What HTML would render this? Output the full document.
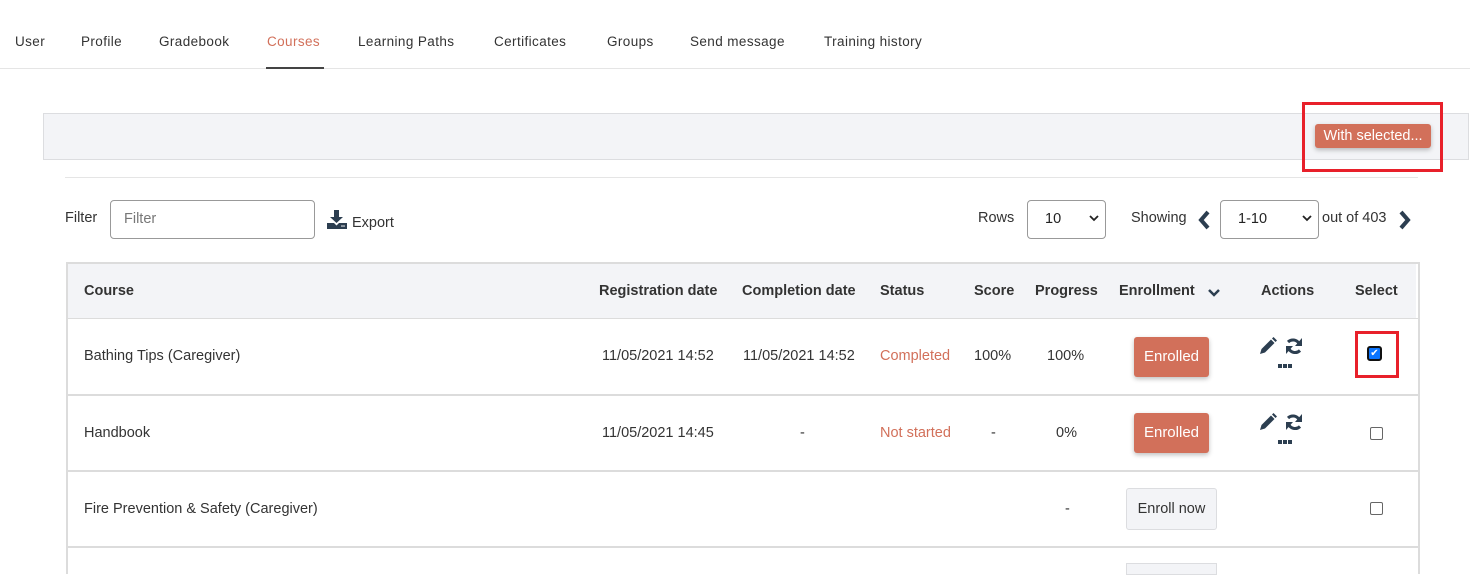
<!DOCTYPE html><html><head><style>
body{margin:0;width:1470px;height:567px;overflow:hidden;background:#fff;font-family:"Liberation Sans",sans-serif;color:#343a40;position:relative}
.a{position:absolute;white-space:nowrap}
.nav{font-size:13.5px;letter-spacing:.4px;color:#333;top:34px}
.th{font-size:14.5px;font-weight:bold;color:#333;top:283px}
.td{font-size:14.5px;color:#333}
.btn{position:absolute;background:#d2705a;color:#fff;font-size:15px;border-radius:3px;box-shadow:0 2px 5px rgba(0,0,0,.25);text-align:center}
.hl{position:absolute;left:66px;width:1352px;height:2px;background:#dcdcdc}
.cb{position:absolute;width:11px;height:11px;border:1px solid #666;border-radius:2px;background:#fff}
</style></head><body>
<div class="a nav" style="left:15px">User</div>
<div class="a nav" style="left:81px">Profile</div>
<div class="a nav" style="left:159px">Gradebook</div>
<div class="a nav" style="left:267px;color:#d2705a">Courses</div>
<div class="a nav" style="left:358px">Learning Paths</div>
<div class="a nav" style="left:494px">Certificates</div>
<div class="a nav" style="left:607px">Groups</div>
<div class="a nav" style="left:690px">Send message</div>
<div class="a nav" style="left:824px">Training history</div>
<div class="a" style="left:0;top:68px;width:1470px;height:1px;background:#e5e5e5"></div>
<div class="a" style="left:266px;top:67px;width:58px;height:2px;background:#444"></div>

<div class="a" style="left:43px;top:113px;width:1424px;height:45px;background:#f3f4f7;border:1px solid #dcdde0"></div>
<div class="btn" style="left:1315px;top:124px;width:116px;height:24px;line-height:24px;font-size:14.5px">With selected...</div>
<div class="a" style="left:1302px;top:102px;width:135px;height:64px;border:3px solid #e8202a"></div>
<div class="a" style="left:65px;top:177px;width:1353px;height:1px;background:#e5e5e5"></div>

<div class="a td" style="left:65px;top:210px">Filter</div>
<div class="a" style="left:110px;top:200px;width:203px;height:37px;border:1px solid #999;border-radius:4px"></div>
<div class="a td" style="left:124px;top:211px;color:#777">Filter</div>
<svg class="a" style="left:327px;top:210px" width="20" height="19" viewBox="0 0 20 19"><path d="M7 0h5v7h4l-6.5 6L3 7h4z" fill="#2c3e50"/><path d="M0 13h7l2.5 2.5L12 13h8v6H0z" fill="#2c3e50"/><circle cx="15" cy="16" r=".8" fill="#fff"/><circle cx="17" cy="16" r=".8" fill="#fff"/></svg>
<div class="a td" style="left:352px;top:215px">Export</div>

<div class="a td" style="left:978px;top:210px">Rows</div>
<div class="a" style="left:1027px;top:200px;width:77px;height:37px;border:1px solid #999;border-radius:4px"></div>
<div class="a td" style="left:1045px;top:211px;color:#222">10</div>
<svg class="a" style="left:1089px;top:215px" width="10" height="7"><path d="M1 1l4 4 4-4" stroke="#222" stroke-width="1.8" fill="none"/></svg>
<div class="a td" style="left:1131px;top:210px">Showing</div>
<svg class="a" style="left:1198px;top:210px" width="14" height="20"><path d="M10 2L3 10l7 8" stroke="#2c3e50" stroke-width="4" fill="none"/></svg>
<div class="a" style="left:1220px;top:200px;width:97px;height:37px;border:1px solid #999;border-radius:4px"></div>
<div class="a td" style="left:1238px;top:211px;color:#222">1-10</div>
<svg class="a" style="left:1302px;top:215px" width="10" height="7"><path d="M1 1l4 4 4-4" stroke="#222" stroke-width="1.8" fill="none"/></svg>
<div class="a td" style="left:1322px;top:210px">out of 403</div>
<svg class="a" style="left:1398px;top:210px" width="14" height="20"><path d="M3 2l7 8-7 8" stroke="#2c3e50" stroke-width="4" fill="none"/></svg>

<div class="a" style="left:66px;top:262px;width:1350px;height:310px;border:2px solid #dcdcdc;border-bottom:none"></div>
<div class="a" style="left:68px;top:264px;width:1348px;height:54px;background:#f3f4f7"></div>
<div class="hl" style="top:318px;height:1px"></div>
<div class="hl" style="top:394px"></div>
<div class="hl" style="top:470px"></div>
<div class="hl" style="top:546px"></div>
<div class="a th" style="left:84px">Course</div>
<div class="a th" style="left:599px">Registration date</div>
<div class="a th" style="left:742px">Completion date</div>
<div class="a th" style="left:880px">Status</div>
<div class="a th" style="left:974px">Score</div>
<div class="a th" style="left:1035px">Progress</div>
<div class="a th" style="left:1119px">Enrollment</div>
<svg class="a" style="left:1207px;top:288px" width="14" height="10"><path d="M2 2l5 5 5-5" stroke="#2c3e50" stroke-width="2.5" fill="none"/></svg>
<div class="a th" style="left:1261px">Actions</div>
<div class="a th" style="left:1355px">Select</div>

<div class="a td" style="left:84px;top:348px">Bathing Tips (Caregiver)</div>
<div class="a td" style="left:602px;top:348px">11/05/2021 14:52</div>
<div class="a td" style="left:743px;top:348px">11/05/2021 14:52</div>
<div class="a td" style="left:880px;top:348px;color:#d2705a">Completed</div>
<div class="a td" style="left:974px;top:348px">100%</div>
<div class="a td" style="left:1047px;top:348px">100%</div>
<div class="btn" style="left:1134px;top:337px;width:75px;height:40px;line-height:40px">Enrolled</div>

<div class="a td" style="left:84px;top:425px">Handbook</div>
<div class="a td" style="left:602px;top:425px">11/05/2021 14:45</div>
<div class="a td" style="left:800px;top:425px">-</div>
<div class="a td" style="left:880px;top:425px;color:#d2705a">Not started</div>
<div class="a td" style="left:991px;top:425px">-</div>
<div class="a td" style="left:1056px;top:425px">0%</div>
<div class="btn" style="left:1134px;top:413px;width:75px;height:40px;line-height:40px">Enrolled</div>

<div class="a td" style="left:84px;top:501px">Fire Prevention &amp; Safety (Caregiver)</div>
<div class="a td" style="left:1065px;top:501px">-</div>
<div class="a td" style="left:1126px;top:488px;width:89px;height:40px;line-height:40px;background:#f3f4f7;border:1px solid #dcdde0;border-radius:3px;text-align:center">Enroll now</div>
<div class="a" style="left:1126px;top:563px;width:89px;height:10px;border:1px solid #dcdde0;background:#f3f4f7"></div>

<svg class="a" style="left:1259px;top:336px" width="60" height="36">
<path d="M1 18l1.5-5L12 3.5l3.5 3.5L6 16.5z" fill="#2c3e50"/><path d="M13 2.5l1.5-1.5 3.5 3.5-1.5 1.5z" fill="#2c3e50"/>
<path d="M40 7.5A7 7 0 0 0 29 6" stroke="#2c3e50" stroke-width="3" fill="none"/><path d="M43 2v8h-7z" fill="#2c3e50"/>
<path d="M30 13A7 7 0 0 0 41 14.5" stroke="#2c3e50" stroke-width="3" fill="none"/><path d="M27 18v-8h7z" fill="#2c3e50"/>
<rect x="19" y="28" width="4" height="4" fill="#2c3e50"/><rect x="24" y="28" width="4" height="4" fill="#2c3e50"/><rect x="29" y="28" width="4" height="4" fill="#2c3e50"/></svg>
<svg class="a" style="left:1259px;top:412px" width="60" height="36">
<path d="M1 18l1.5-5L12 3.5l3.5 3.5L6 16.5z" fill="#2c3e50"/><path d="M13 2.5l1.5-1.5 3.5 3.5-1.5 1.5z" fill="#2c3e50"/>
<path d="M40 7.5A7 7 0 0 0 29 6" stroke="#2c3e50" stroke-width="3" fill="none"/><path d="M43 2v8h-7z" fill="#2c3e50"/>
<path d="M30 13A7 7 0 0 0 41 14.5" stroke="#2c3e50" stroke-width="3" fill="none"/><path d="M27 18v-8h7z" fill="#2c3e50"/>
<rect x="19" y="28" width="4" height="4" fill="#2c3e50"/><rect x="24" y="28" width="4" height="4" fill="#2c3e50"/><rect x="29" y="28" width="4" height="4" fill="#2c3e50"/></svg>

<div class="a" style="left:1355px;top:331px;width:38px;height:41px;border:3px solid #e8202a"></div>
<div class="a" style="left:1367px;top:346px;width:15px;height:15px;background:#0b75ff;border:2px solid #111;border-radius:3px;box-sizing:border-box;color:#fff;font-size:10px;line-height:11px;text-align:center">&#10004;</div>
<div class="cb" style="left:1370px;top:427px"></div>
<div class="cb" style="left:1370px;top:502px"></div>
</body></html>
